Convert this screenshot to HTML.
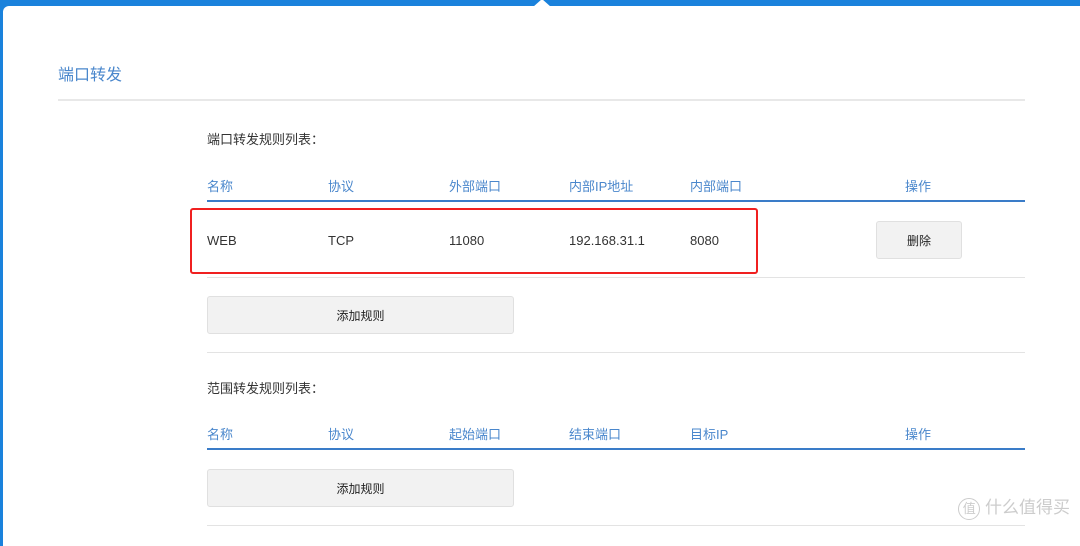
<!DOCTYPE html>
<html><head><meta charset="utf-8"><style>
body{margin:0;width:1080px;height:528px;overflow:hidden;background:#1a82dc;font-family:"Liberation Sans","Noto Sans CJK SC",sans-serif;position:relative}
.panel{position:absolute;left:3px;top:6px;width:1090px;height:540px;background:#fff;border-radius:6px 0 0 0}
.notch{position:absolute;left:533px;top:-1px;width:0;height:0;border-left:9px solid transparent;border-right:9px solid transparent;border-bottom:8px solid #fff}
.a{position:absolute;white-space:nowrap}
.t{left:58px;top:61px;font-size:16px;color:#4a87cc}
.hl{position:absolute;height:1px;background:#e3e3e3}
.bl{position:absolute;height:2px;background:#3a7cc8}
.lab{font-size:13px;color:#333}
.h{font-size:13px;color:#4a87cc}
.d{font-size:13px;color:#333}
.btn{position:absolute;background:#f2f2f2;border:1px solid #e0e0e0;border-radius:3px;font-size:12px;color:#222;display:flex;align-items:center;justify-content:center}
.red{position:absolute;left:190px;top:208px;width:564px;height:62px;border:2px solid #f02020;border-radius:3px}
.wm{right:10px;top:493px;font-size:17px;color:#ccc}
</style></head><body>
<div class="notch"></div>
<div class="panel"></div>
<div class="a t">端口转发</div>
<div class="hl" style="left:58px;top:99px;width:967px;height:2px;background:#e8e8e8"></div>
<div class="a lab" style="left:207px;top:129px">端口转发规则列表：</div>
<div class="a h" style="left:207px;top:176px">名称</div>
<div class="a h" style="left:328px;top:176px">协议</div>
<div class="a h" style="left:449px;top:176px">外部端口</div>
<div class="a h" style="left:569px;top:176px">内部IP地址</div>
<div class="a h" style="left:690px;top:176px">内部端口</div>
<div class="a h" style="left:905px;top:176px">操作</div>
<div class="bl" style="left:207px;top:200px;width:818px"></div>
<div class="a d" style="left:207px;top:233px">WEB</div>
<div class="a d" style="left:328px;top:233px">TCP</div>
<div class="a d" style="left:449px;top:233px">11080</div>
<div class="a d" style="left:569px;top:233px">192.168.31.1</div>
<div class="a d" style="left:690px;top:233px">8080</div>
<div class="btn" style="left:876px;top:221px;width:84px;height:36px">删除</div>
<div class="red"></div>
<div class="hl" style="left:207px;top:277px;width:818px"></div>
<div class="btn" style="left:207px;top:296px;width:305px;height:36px">添加规则</div>
<div class="hl" style="left:207px;top:352px;width:818px"></div>
<div class="a lab" style="left:207px;top:378px">范围转发规则列表：</div>
<div class="a h" style="left:207px;top:424px">名称</div>
<div class="a h" style="left:328px;top:424px">协议</div>
<div class="a h" style="left:449px;top:424px">起始端口</div>
<div class="a h" style="left:569px;top:424px">结束端口</div>
<div class="a h" style="left:690px;top:424px">目标IP</div>
<div class="a h" style="left:905px;top:424px">操作</div>
<div class="bl" style="left:207px;top:448px;width:818px"></div>
<div class="btn" style="left:207px;top:469px;width:305px;height:36px">添加规则</div>
<div class="hl" style="left:207px;top:525px;width:818px"></div>
<div class="a wm"><span style="display:inline-block;width:20px;height:20px;border:1px solid #ccc;border-radius:50%;text-align:center;line-height:20px;font-size:13px">值</span> 什么值得买</div>
</body></html>
